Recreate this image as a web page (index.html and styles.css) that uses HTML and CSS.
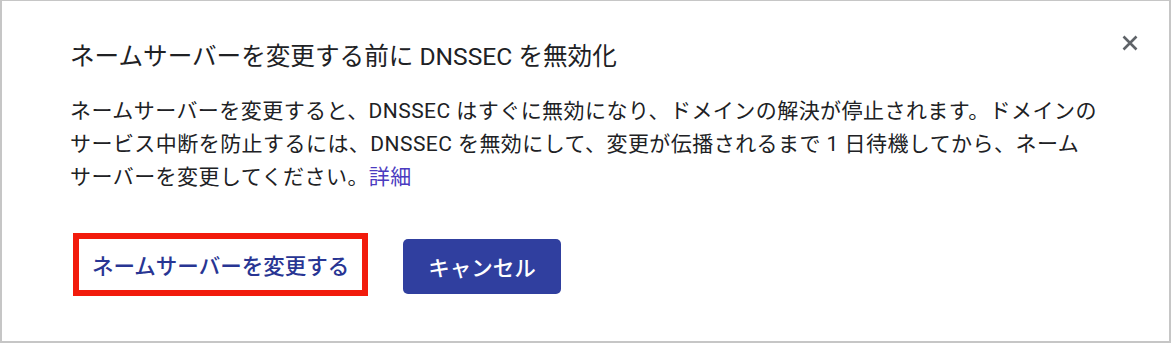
FILE: index.html
```html
<!DOCTYPE html>
<html lang="ja">
<head>
<meta charset="utf-8">
<title>DNSSEC</title>
<link rel="stylesheet" href="styles.css">
</head>
<body>
<div class="frame">
  <button class="close" aria-label="閉じる">
    <svg viewBox="0 0 16 16" width="16" height="16"><path d="M1.5 1.5L14.5 14.5M14.5 1.5L1.5 14.5" stroke="#5f6368" stroke-width="2.6" stroke-linecap="butt" fill="none"/></svg>
  </button>
  <h1 class="title">ネームサーバーを変更する前に DNSSEC を無効化</h1>
  <p class="body">ネームサーバーを変更すると、DNSSEC はすぐに無効になり、ドメインの解決が停止されます。ドメインのサービス中断を防止するには、DNSSEC を無効にして、変更が伝播されるまで 1 日待機してから、ネームサーバーを変更してください。<a class="link" href="#">詳細</a></p>
  <div class="actions">
    <button class="btn-flat">ネームサーバーを変更する</button>
    <button class="btn-primary">キャンセル</button>
  </div>
</div>
</body>
</html>
```

FILE: styles.css
```css
html, body {
  margin: 0;
  padding: 0;
  background: #ffffff;
}
body {
  font-family: Roboto, "Noto Sans CJK JP", sans-serif;
  color: #202124;
}
.frame {
  box-sizing: border-box;
  width: 1171px;
  height: 343px;
  border-top: 1px solid #c6c6c6;
  border-left: 2px solid #c6c6c6;
  border-right: 2px solid #c6c6c6;
  border-bottom: 2px solid #c6c6c6;
  padding: 40px 0 0 68px;
  position: relative;
}
.close {
  position: absolute;
  top: 34px;
  right: 31px;
  width: 16px;
  height: 16px;
  padding: 0;
  border: none;
  background: transparent;
  display: flex;
}
.title {
  margin: 0;
  font-size: 24.6px;
  line-height: 32px;
  font-weight: 400;
  color: #202124;
}
.body {
  margin: 22px 0 0 0;
  width: 1030px;
  font-size: 21px;
  letter-spacing: 0.45px;
  line-height: 33px;
  color: #202124;
}
.link {
  color: #4b3bc0;
  text-decoration: none;
}
.actions {
  margin: 39px 0 0 3px;
  display: flex;
  align-items: flex-start;
  gap: 35px;
}
.btn-flat {
  box-sizing: border-box;
  height: 63px;
  padding: 0 13px;
  border: 6px solid #f21b0c;
  background: #ffffff;
  color: #283593;
  font-family: inherit;
  font-size: 21.5px;
  font-weight: 500;
}
.btn-primary {
  box-sizing: border-box;
  height: 55px;
  margin-top: 6px;
  padding: 0 25px;
  border: none;
  border-radius: 5px;
  background: #303f9f;
  color: #ffffff;
  font-family: inherit;
  font-size: 21.5px;
  font-weight: 500;
}
```
